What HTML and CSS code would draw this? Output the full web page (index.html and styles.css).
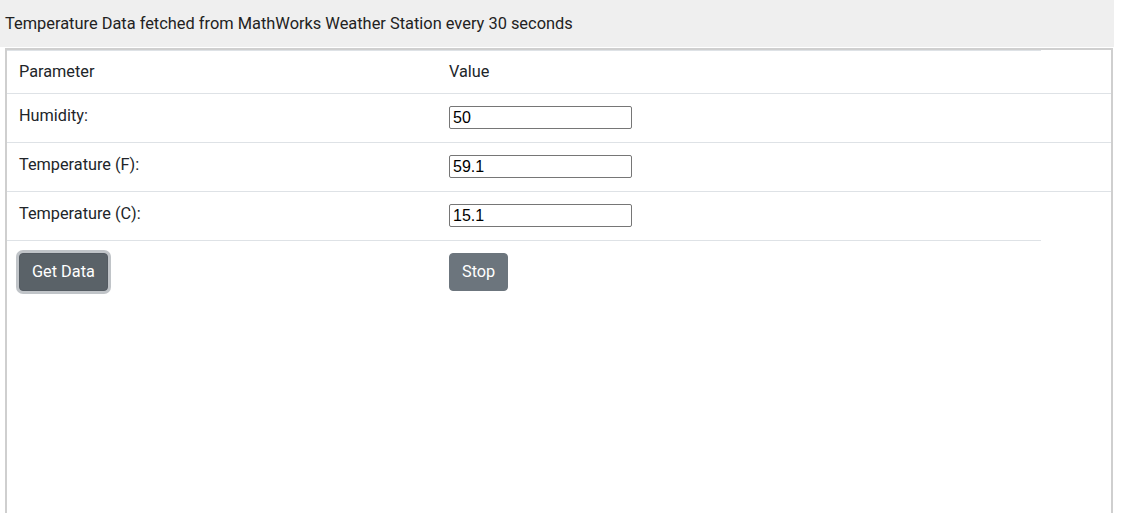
FILE: index.html
```html
<!DOCTYPE html>
<html lang="en">

<head>
    <meta charset="UTF-8">
    <meta name="viewport" content="width=device-width, initial-scale=1.0">
    <title>Weather Station</title>
    <link rel="stylesheet" href="styles.css">
</head>

<body>

    <div class="topbar">
        <span>Temperature Data fetched from MathWorks Weather Station every 30 seconds</span>
    </div>

    <div class="frame">
        <div class="row row_short head">
            <div class="cell">Parameter</div>
            <div class="cell">Value</div>
        </div>
        <div class="row">
            <div class="cell">Humidity:</div>
            <div class="cell"><input type="text" class="val" value="50"></div>
        </div>
        <div class="row">
            <div class="cell">Temperature (F):</div>
            <div class="cell"><input type="text" class="val" value="59.1"></div>
        </div>
        <div class="row">
            <div class="cell">Temperature (C):</div>
            <div class="cell"><input type="text" class="val" value="15.1"></div>
        </div>
        <div class="row row_short buttons">
            <div class="cell"><button class="btn btn_active">Get Data</button></div>
            <div class="cell"><button class="btn">Stop</button></div>
        </div>
    </div>

</body>

</html>
```

FILE: styles.css
```css
body {
    margin: 0;
    font-family: Roboto, "Liberation Sans", Arial, sans-serif;
    color: #212529;
    background: #fff;
}

.topbar {
    width: 1114px;
    height: 47px;
    background-color: #efefef;
    display: flex;
    align-items: center;
    padding-left: 5px;
    padding-bottom: 1px;
    box-sizing: border-box;
    font-size: 16.4px;
    color: #222;
}

.frame {
    margin-top: 1px;
    margin-left: 5px;
    width: 1108px;
    height: 480px;
    border: 2px solid #cfcfcf;
    box-sizing: border-box;
    border-bottom: none;
}

.row {
    display: grid;
    grid-template-columns: 430px 1fr;
    border-top: 1px solid #dee2e6;
    font-size: 16.3px;
}

.row_short {
    width: 1034px;
}

.cell {
    padding: 11px 12px 12px 12px;
    height: 48px;
    box-sizing: border-box;
    line-height: 22px;
}

.head .cell {
    height: 42px;
    padding-top: 10px;
}

.val {
    width: 183px;
    height: 23px;
    box-sizing: border-box;
    border: 1px solid #767676;
    border-radius: 2px;
    padding: 1px 3px;
    font-family: "Liberation Sans", Arial, sans-serif;
    font-size: 16px;
    color: #000;
    margin-top: 1px;
}

.buttons .cell {
    padding-top: 12px;
    height: auto;
}

.btn {
    font-family: Roboto, "Liberation Sans", Arial, sans-serif;
    font-size: 16.3px;
    color: #fff;
    background-color: #6c757d;
    border: 1px solid #6c757d;
    border-radius: 4px;
    padding: 0 12px;
    height: 38px;
    line-height: 36px;
    cursor: pointer;
}

.btn_active {
    background-color: #5a6268;
    border-color: #545b62;
    box-shadow: 0 0 0 3px rgba(130, 138, 145, 0.5);
}
```
